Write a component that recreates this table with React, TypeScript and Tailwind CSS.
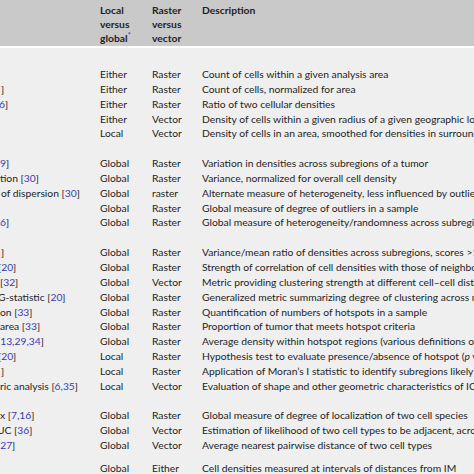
import React from "react";

type Row = { left?: React.ReactNode; lg?: string; rv?: string; desc?: React.ReactNode; blank?: boolean; short?: boolean };

const B = ({ children }: { children: React.ReactNode }) => <span className="text-[#3a3ab4]">{children}</span>;

const rows: Row[] = [
  { left: "", lg: "Either", rv: "Raster", desc: "Count of cells within a given analysis area" },
  { left: <span className="ml-[1px]">]</span>, lg: "Either", rv: "Raster", desc: "Count of cells, normalized for area" },
  { left: <span className="-ml-[1px]"><B>6</B>]</span>, lg: "Either", rv: "Raster", desc: "Ratio of two cellular densities" },
  { left: "", lg: "Either", rv: "Vector", desc: "Density of cells within a given radius of a given geographic location" },
  { left: "", lg: "Local", rv: "Vector", desc: "Density of cells in an area, smoothed for densities in surrounding areas" },
  { blank: true },
  { left: <span><B>9</B>]</span>, lg: "Global", rv: "Raster", desc: "Variation in densities across subregions of a tumor" },
  { left: <span>tion [<B>30</B>]</span>, lg: "Global", rv: "Raster", desc: "Variance, normalized for overall cell density" },
  { left: <span className="ml-[1px]"> of dispersion [<B>30</B>]</span>, lg: "Global", rv: "raster", desc: "Alternate measure of heterogeneity, less influenced by outliers" },
  { left: "", lg: "Global", rv: "Raster", desc: "Global measure of degree of outliers in a sample" },
  { left: <span><B>6</B>]</span>, lg: "Global", rv: "Raster", desc: "Global measure of heterogeneity/randomness across subregions" },
  { blank: true },
  { left: <span className="ml-[1px]">]</span>, lg: "Global", rv: "Raster", desc: "Variance/mean ratio of densities across subregions, scores >1 indicate" },
  { left: <span className="-ml-[2px]">[<B>20</B>]</span>, lg: "Global", rv: "Raster", desc: "Strength of correlation of cell densities with those of neighboring" },
  { left: <span>[<B>32</B>]</span>, lg: "Global", rv: "Vector", desc: "Metric providing clustering strength at different cell–cell distances" },
  { left: <span className="-ml-[2px]">G-statistic [<B>20</B>]</span>, lg: "Global", rv: "Raster", desc: "Generalized metric summarizing degree of clustering across many" },
  { left: <span>on [<B>33</B>]</span>, lg: "Global", rv: "Raster", desc: "Quantification of numbers of hotspots in a sample" },
  { left: <span>area [<B>33</B>]</span>, lg: "Global", rv: "Raster", desc: "Proportion of tumor that meets hotspot criteria" },
  { left: <span className="-ml-[3px]">[<B>13,29,34</B>]</span>, lg: "Global", rv: "Raster", desc: "Average density within hotspot regions (various definitions of hotspot)" },
  { left: <span className="-ml-[2px]">[<B>20</B>]</span>, lg: "Local", rv: "Raster", desc: <span>Hypothesis test to evaluate presence/absence of hotspot (<i>p</i> value)</span> },
  { left: <span className="ml-[1px]">]</span>, lg: "Local", rv: "Raster", desc: "Application of Moran’s I statistic to identify subregions likely to be" },
  { left: <span>ric analysis [<B>6,35</B>]</span>, lg: "Local", rv: "Vector", desc: "Evaluation of shape and other geometric characteristics of IC regions" },
  { blank: true },
  { left: <span>x [<B>7,16</B>]</span>, lg: "Global", rv: "Raster", desc: "Global measure of degree of localization of two cell species" },
  { left: <span className="-ml-[3px]">UC [<B>36</B>]</span>, lg: "Global", rv: "Vector", desc: "Estimation of likelihood of two cell types to be adjacent, across" },
  { left: <span className="-ml-[3px]">[<B>27</B>]</span>, lg: "Global", rv: "Vector", desc: "Average nearest pairwise distance of two cell types" },
  { blank: true, short: true },
  { left: "", lg: "Global", rv: "Either", desc: "Cell densities measured at intervals of distances from IM" },
];

export default function App() {
  return (
    <div
      className="w-[474px] h-[474px] overflow-hidden bg-[#efefef] text-[#1e1e1e] text-[10.3px]"
      style={{ fontFamily: "Lato, 'Open Sans', sans-serif" }}
    >
      <div className="bg-[#c9c9c9] h-[46px] pt-[3px] grid grid-cols-[100px_52px_50px_1fr] font-bold leading-[14px] whitespace-nowrap">
        <div />
        <div className="flex flex-col">
          <span>Local</span>
          <span>versus</span>
          <span>
            global<span className="text-[#5a4fc8] text-[8px] leading-none align-top">*</span>
          </span>
        </div>
        <div className="flex flex-col">
          <span>Raster</span>
          <span>versus</span>
          <span>vector</span>
        </div>
        <div>Description</div>
      </div>
      <div className="h-[2px] bg-white" />
      <div className="pt-[19px] flex flex-col">
        {rows.map((r, i) =>
          r.blank ? (
            <div key={i} className={r.short ? "h-[8px]" : "h-[14.85px]"} />
          ) : (
            <div key={i} className="grid grid-cols-[100px_52px_50px_1fr] h-[14.85px] leading-[14.85px] whitespace-nowrap">
              <div className="overflow-visible">{r.left}</div>
              <div>{r.lg}</div>
              <div>{r.rv}</div>
              <div className="overflow-hidden">{r.desc}</div>
            </div>
          )
        )}
      </div>
    </div>
  );
}
